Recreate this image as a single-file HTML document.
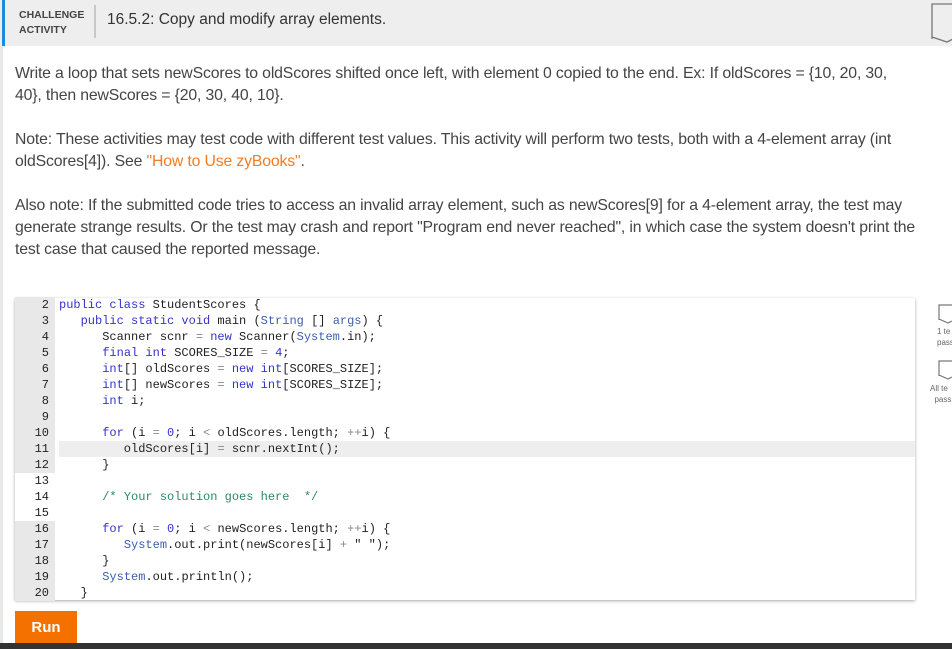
<!DOCTYPE html>
<html><head><meta charset="utf-8"><style>
*{margin:0;padding:0;box-sizing:border-box}
body{width:952px;height:649px;background:#fff;font-family:"Liberation Sans",sans-serif;position:relative;overflow:hidden}
.lb{position:absolute;left:0;top:0;width:3px;height:643px;background:#e8e8e8}
.hdr{position:absolute;left:0;top:0;width:952px;height:46px;background:#eeeeee}
.blue{position:absolute;left:2px;top:0;width:3px;height:46px;background:#1a8ae0}
.ca{position:absolute;left:19px;top:8px;font-size:10.5px;font-weight:bold;color:#444;line-height:15px}
.sep{position:absolute;left:94px;top:5px;width:2px;height:33px;background:#c8c8c8}
.title{position:absolute;left:107px;top:11px;font-size:15.5px;color:#333}
.p{position:absolute;left:15px;width:915px;font-size:15.8px;line-height:21.8px;color:#444;letter-spacing:-0.15px}
.p a{color:#f47b20}
.code{position:absolute;left:15px;top:298px;width:900px;height:302px;background:#fff;box-shadow:0 1px 3px rgba(0,0,0,.35)}
.gut{position:absolute;left:0;top:0;width:40px;height:302px}
.ln{height:16px;font-family:"Liberation Mono",monospace;font-size:12px;line-height:16px;text-align:right;padding-right:6px;color:#222;background:#e8e8e8}
.ln.w{background:#fff}
.src{position:absolute;left:44px;top:0;right:0}
.l{height:16px;font-family:"Liberation Mono",monospace;font-size:12px;line-height:16px;color:#222;white-space:pre}
.hl{background:#eeeeee}
.k{color:#3333cc}.t{color:#3a5fb0}.c{color:#2a8a6a}.o{color:#888}
.run{position:absolute;left:15px;top:611px;width:62px;height:33px;background:#f47100;color:#fff;font-weight:bold;font-size:15px;text-align:center;line-height:33px}
.bar{position:absolute;left:0;top:643px;width:952px;height:6px;background:#333}
svg.ic{position:absolute}
.sm{position:absolute;left:930px;font-size:8px;color:#666;line-height:11px}
</style></head><body>
<div class="lb"></div>
<div class="hdr"></div><div class="blue"></div>
<div class="ca">CHALLENGE<br>ACTIVITY</div>
<div class="sep"></div>
<div class="title">16.5.2: Copy and modify array elements.</div>
<svg class="ic" style="left:931px;top:3px" width="21" height="40"><path d="M1 36V1H30M1 34L16 39L22 36" fill="none" stroke="#777" stroke-width="1.3"/></svg>
<div class="p" style="top:63px;width:880px">Write a loop that sets newScores to oldScores shifted once left, with element 0 copied to the end. Ex: If oldScores = {10, 20, 30, 40}, then newScores = {20, 30, 40, 10}.</div>
<div class="p" style="top:129px">Note: These activities may test code with different test values. This activity will perform two tests, both with a 4-element array (int oldScores[4]). See <a>"How to Use zyBooks"</a>.</div>
<div class="p" style="top:195px">Also note: If the submitted code tries to access an invalid array element, such as newScores[9] for a 4-element array, the test may generate strange results. Or the test may crash and report "Program end never reached", in which case the system doesn't print the test case that caused the reported message.</div>
<div class="code">
<div class="gut" style="top:-1px">
<div class="ln">2</div><div class="ln">3</div><div class="ln">4</div><div class="ln">5</div><div class="ln">6</div><div class="ln">7</div><div class="ln">8</div><div class="ln">9</div><div class="ln">10</div><div class="ln">11</div><div class="ln">12</div><div class="ln w">13</div><div class="ln w">14</div><div class="ln w">15</div><div class="ln">16</div><div class="ln">17</div><div class="ln">18</div><div class="ln">19</div><div class="ln">20</div>
</div>
<div class="src" style="top:-1px">
<div class="l"><span class="k">public class</span> StudentScores {</div>
<div class="l">   <span class="k">public static void</span> main (<span class="t">String</span> [] <span class="t">args</span>) {</div>
<div class="l">      Scanner scnr <span class="o">=</span> <span class="k">new</span> Scanner(<span class="t">System</span>.in);</div>
<div class="l">      <span class="k">final int</span> SCORES_SIZE <span class="o">=</span> <span class="k">4</span>;</div>
<div class="l">      <span class="k">int</span>[] oldScores <span class="o">=</span> <span class="k">new int</span>[SCORES_SIZE];</div>
<div class="l">      <span class="k">int</span>[] newScores <span class="o">=</span> <span class="k">new int</span>[SCORES_SIZE];</div>
<div class="l">      <span class="k">int</span> i;</div>
<div class="l"> </div>
<div class="l">      <span class="k">for</span> (i <span class="o">=</span> <span class="k">0</span>; i <span class="o">&lt;</span> oldScores.length; <span class="o">++</span>i) {</div>
<div class="l hl">         oldScores[i] <span class="o">=</span> scnr.nextInt();</div>
<div class="l">      }</div>
<div class="l"> </div>
<div class="l">      <span class="c">/* Your solution goes here  */</span></div>
<div class="l"> </div>
<div class="l">      <span class="k">for</span> (i <span class="o">=</span> <span class="k">0</span>; i <span class="o">&lt;</span> newScores.length; <span class="o">++</span>i) {</div>
<div class="l">         <span class="t">System</span>.out.print(newScores[i] <span class="o">+</span> " ");</div>
<div class="l">      }</div>
<div class="l">      <span class="t">System</span>.out.println();</div>
<div class="l">   }</div>
</div>
</div>
<svg class="ic" style="left:938px;top:304px" width="14" height="22"><path d="M1 16V1H20M1 15L10 19L14 17" fill="none" stroke="#777" stroke-width="1.2"/></svg>
<div class="sm" style="top:326px;left:937px">1 te<br>pass</div>
<svg class="ic" style="left:938px;top:360px" width="14" height="22"><path d="M1 16V1H20M1 15L10 19L14 17" fill="none" stroke="#777" stroke-width="1.2"/></svg>
<div class="sm" style="top:383px">All te<br>&nbsp;&nbsp;pass</div>
<div class="run">Run</div>
<div class="bar"></div>
</body></html>
